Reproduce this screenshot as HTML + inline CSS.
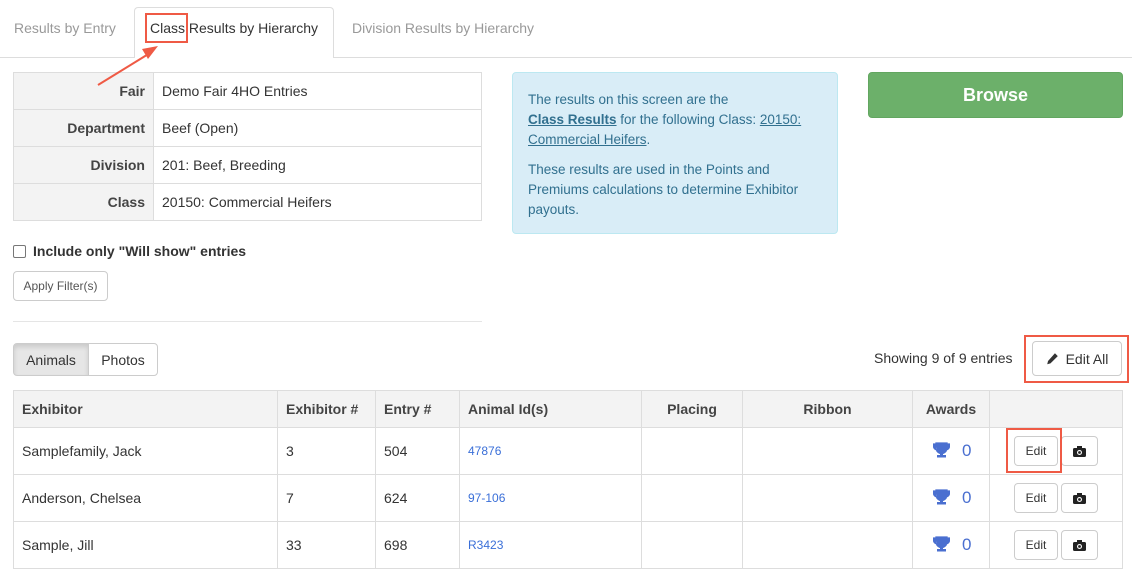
<!DOCTYPE html>
<html><head><style>
*{box-sizing:border-box}
body{margin:0;width:1132px;height:571px;overflow:hidden;background:#fff;font-family:"Liberation Sans",sans-serif;font-size:14px;color:#333;position:relative}
.a{position:absolute}
.tab{position:absolute;top:20px;font-size:14px;color:#999}
.info{position:absolute;left:13px;top:72px;width:469px;border-collapse:collapse}
.info td{border:1px solid #ddd;height:37px;padding:0 8px}
.info td.l{background:#f3f3f3;font-weight:bold;text-align:right;width:140px;color:#444}
.btn{position:absolute;border:1px solid #ccc;border-radius:4px;background:#fff;display:flex;align-items:center;justify-content:center}
.res{position:absolute;left:13px;top:390px;width:1110px;border-collapse:collapse}
.res td,.res th{border:1px solid #ddd;padding:0 8px;text-align:left}
.res th{background:#f3f3f3;height:37px;color:#444}
.res td{height:47px}
.lnk{color:#3a6fd8;font-size:12px}
.aw{color:#4a6fd0;font-size:17px;text-align:left}
.res td.aw{padding-left:20px}
.aw svg{vertical-align:-2px;margin-right:12px}
</style></head><body>
<div class="a" style="left:0;top:57px;width:1132px;border-top:1px solid #ddd"></div>
<div class="a" style="left:134px;top:7px;width:200px;height:51px;border:1px solid #ddd;border-bottom:none;border-radius:4px 4px 0 0;background:#fff"></div>
<div class="tab" style="left:14px">Results by Entry</div>
<div class="tab" style="left:150px;color:#333">Class Results by Hierarchy</div>
<div class="tab" style="left:352px">Division Results by Hierarchy</div>
<div class="a" style="left:145px;top:13px;width:43px;height:30px;border:2px solid #ef5a45"></div>
<table class="info">
<tr><td class="l">Fair</td><td>Demo Fair 4HO Entries</td></tr>
<tr><td class="l">Department</td><td>Beef (Open)</td></tr>
<tr><td class="l">Division</td><td>201: Beef, Breeding</td></tr>
<tr><td class="l">Class</td><td>20150: Commercial Heifers</td></tr>
</table>
<svg class="a" style="left:90px;top:40px;z-index:5" width="80" height="50"><line x1="8" y1="45" x2="60" y2="13" stroke="#ef5a45" stroke-width="2"/><polygon points="68,6 52,9 58,19" fill="#ef5a45"/></svg>
<div class="a" style="left:512px;top:72px;width:326px;height:162px;background:#d9edf7;border:1px solid #bce8f1;border-radius:4px;padding:17px 10px 15px 15px;color:#31708f;line-height:20px;font-size:13.5px;white-space:nowrap">
<div>The results on this screen are the<br><b><u>Class Results</u></b> for the following Class: <u>20150:</u><br><u>Commercial Heifers</u>.</div>
<div style="margin-top:10px">These results are used in the Points and<br>Premiums calculations to determine Exhibitor<br>payouts.</div></div>
<div class="btn" style="left:868px;top:72px;width:255px;height:46px;background:#6cb06a;border-color:#62a660;color:#fff;font-size:18px;font-weight:bold">Browse</div>
<div class="a" style="left:13px;top:245px;width:13px;height:13px;border:1px solid #777;border-radius:2px"></div>
<div class="a" style="left:33px;top:243px;font-weight:bold">Include only "Will show" entries</div>
<div class="btn" style="left:13px;top:271px;width:95px;height:30px;font-size:12px;color:#555">Apply Filter(s)</div>
<div class="a" style="left:13px;top:321px;width:469px;border-top:1px solid #e5e5e5"></div>
<div class="btn" style="left:13px;top:343px;width:76px;height:33px;background:#e6e6e6;border-radius:4px 0 0 4px;box-shadow:inset 0 3px 5px rgba(0,0,0,.12)">Animals</div>
<div class="btn" style="left:88px;top:343px;width:70px;height:33px;border-radius:0 4px 4px 0">Photos</div>
<div class="a" style="left:874px;top:350px">Showing 9 of 9 entries</div>
<div class="btn" style="left:1032px;top:341px;width:90px;height:35px"><svg width="13" height="13" viewBox="0 0 16 16" style="margin-right:7px"><path d="M11 1.5l3.5 3.5-9 9-4 1 1-4z" fill="#333"/></svg>Edit All</div>
<div class="a" style="left:1024px;top:335px;width:105px;height:48px;border:2px solid #ef5a45"></div>
<table class="res">
<tr><th style="width:264px">Exhibitor</th><th style="width:98px">Exhibitor #</th><th style="width:84px">Entry #</th><th style="width:182px">Animal Id(s)</th><th style="width:101px;text-align:center">Placing</th><th style="width:170px;text-align:center">Ribbon</th><th style="width:77px;text-align:center">Awards</th><th></th></tr>
<tr><td>Samplefamily, Jack</td><td>3</td><td>504</td><td class="lnk">47876</td><td></td><td></td><td class="aw"><svg width="17" height="16" viewBox="0 0 17 16"><path d="M3 1h11v5a5.5 5.5 0 0 1-11 0z M3 2H0.5v2a4 4 0 0 0 3.5 4 M14 2h2.5v2a4 4 0 0 1-3.5 4" fill="#4a6fd0" stroke="#4a6fd0" stroke-width="1.3"/><rect x="7" y="10" width="3" height="3" fill="#4a6fd0"/><rect x="4" y="13" width="9" height="2.5" fill="#4a6fd0"/></svg>0</td><td></td></tr>
<tr><td>Anderson, Chelsea</td><td>7</td><td>624</td><td class="lnk">97-106</td><td></td><td></td><td class="aw"><svg width="17" height="16" viewBox="0 0 17 16"><path d="M3 1h11v5a5.5 5.5 0 0 1-11 0z M3 2H0.5v2a4 4 0 0 0 3.5 4 M14 2h2.5v2a4 4 0 0 1-3.5 4" fill="#4a6fd0" stroke="#4a6fd0" stroke-width="1.3"/><rect x="7" y="10" width="3" height="3" fill="#4a6fd0"/><rect x="4" y="13" width="9" height="2.5" fill="#4a6fd0"/></svg>0</td><td></td></tr>
<tr><td>Sample, Jill</td><td>33</td><td>698</td><td class="lnk">R3423</td><td></td><td></td><td class="aw"><svg width="17" height="16" viewBox="0 0 17 16"><path d="M3 1h11v5a5.5 5.5 0 0 1-11 0z M3 2H0.5v2a4 4 0 0 0 3.5 4 M14 2h2.5v2a4 4 0 0 1-3.5 4" fill="#4a6fd0" stroke="#4a6fd0" stroke-width="1.3"/><rect x="7" y="10" width="3" height="3" fill="#4a6fd0"/><rect x="4" y="13" width="9" height="2.5" fill="#4a6fd0"/></svg>0</td><td></td></tr>
</table>
<div class="btn" style="left:1014px;top:436px;width:44px;height:30px;font-size:12px">Edit</div>
<div class="btn" style="left:1061px;top:436px;width:37px;height:30px"><svg width="13" height="11" viewBox="0 0 13 11"><rect x="0" y="2" width="13" height="9" rx="1.5" fill="#222"/><rect x="4" y="0" width="5" height="3" fill="#222"/><circle cx="6.5" cy="6.5" r="2.5" fill="#fff"/><circle cx="6.5" cy="6.5" r="1.4" fill="#222"/></svg></div>
<div class="btn" style="left:1014px;top:483px;width:44px;height:30px;font-size:12px">Edit</div>
<div class="btn" style="left:1061px;top:483px;width:37px;height:30px"><svg width="13" height="11" viewBox="0 0 13 11"><rect x="0" y="2" width="13" height="9" rx="1.5" fill="#222"/><rect x="4" y="0" width="5" height="3" fill="#222"/><circle cx="6.5" cy="6.5" r="2.5" fill="#fff"/><circle cx="6.5" cy="6.5" r="1.4" fill="#222"/></svg></div>
<div class="btn" style="left:1014px;top:530px;width:44px;height:30px;font-size:12px">Edit</div>
<div class="btn" style="left:1061px;top:530px;width:37px;height:30px"><svg width="13" height="11" viewBox="0 0 13 11"><rect x="0" y="2" width="13" height="9" rx="1.5" fill="#222"/><rect x="4" y="0" width="5" height="3" fill="#222"/><circle cx="6.5" cy="6.5" r="2.5" fill="#fff"/><circle cx="6.5" cy="6.5" r="1.4" fill="#222"/></svg></div>
<div class="a" style="left:1006px;top:428px;width:56px;height:45px;border:2px solid #ef5a45"></div>
</body></html>
